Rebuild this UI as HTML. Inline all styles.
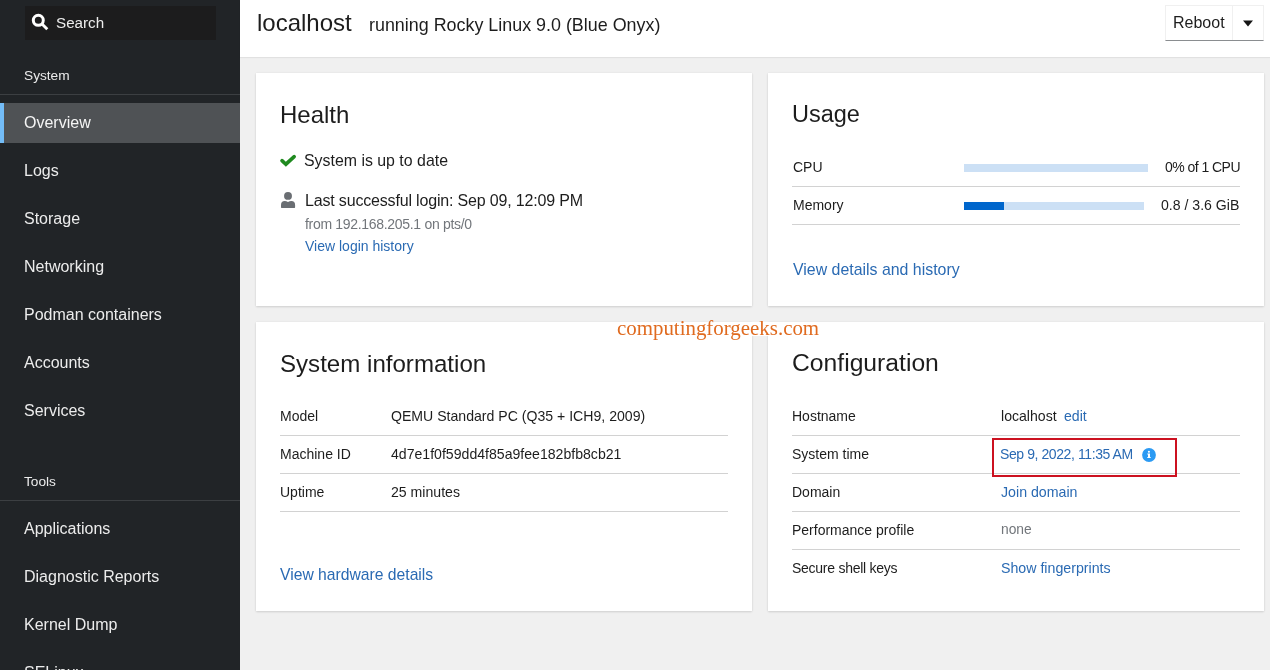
<!DOCTYPE html>
<html><head><meta charset="utf-8"><style>
html,body{margin:0;padding:0;width:1270px;height:670px;overflow:hidden;background:#f0f0f0}
body{position:relative;font-family:"Liberation Sans", sans-serif}
.t{position:absolute;white-space:nowrap;will-change:transform}
.r{position:absolute}
</style></head><body>
<div class="r" style="left:0px;top:0px;width:240px;height:670px;background:#212427;"></div>
<div class="r" style="left:25px;top:6px;width:191px;height:34px;background:#1c1c1d;"></div>
<svg class="r" style="left:30px;top:12px" width="20" height="20" viewBox="0 0 20 20"><circle cx="8.3" cy="8.3" r="5" fill="none" stroke="#fff" stroke-width="3"/><line x1="11.8" y1="11.8" x2="17.3" y2="17.3" stroke="#fff" stroke-width="2.9" stroke-linecap="butt"/></svg>
<div class="t" style="left:56.00px;top:14.93px;font-size:15.2px;line-height:15.2px;color:#ececec;">Search</div>
<div class="t" style="left:24.00px;top:68.70px;font-size:13.7px;line-height:13.7px;color:#ececec;">System</div>
<div class="r" style="left:0px;top:94px;width:240px;height:1px;background:#3c3f42;"></div>
<div class="r" style="left:0px;top:103px;width:240px;height:40px;background:#4f5255;"></div>
<div class="r" style="left:0px;top:103px;width:4px;height:40px;background:#73bcf7;"></div>
<div class="t" style="left:24.00px;top:115.25px;font-size:16px;line-height:16px;color:#f5f5f5;">Overview</div>
<div class="t" style="left:24.00px;top:163.25px;font-size:16px;line-height:16px;color:#ececec;">Logs</div>
<div class="t" style="left:24.00px;top:211.25px;font-size:16px;line-height:16px;color:#ececec;">Storage</div>
<div class="t" style="left:24.00px;top:259.25px;font-size:16px;line-height:16px;color:#ececec;">Networking</div>
<div class="t" style="left:24.00px;top:307.25px;font-size:16px;line-height:16px;color:#ececec;">Podman containers</div>
<div class="t" style="left:24.00px;top:355.25px;font-size:16px;line-height:16px;color:#ececec;">Accounts</div>
<div class="t" style="left:24.00px;top:403.25px;font-size:16px;line-height:16px;color:#ececec;">Services</div>
<div class="t" style="left:24.00px;top:474.60px;font-size:13.7px;line-height:13.7px;color:#ececec;">Tools</div>
<div class="r" style="left:0px;top:500px;width:240px;height:1px;background:#3c3f42;"></div>
<div class="t" style="left:24.00px;top:521.25px;font-size:16px;line-height:16px;color:#ececec;">Applications</div>
<div class="t" style="left:24.00px;top:569.25px;font-size:16px;line-height:16px;color:#ececec;">Diagnostic Reports</div>
<div class="t" style="left:24.00px;top:617.25px;font-size:16px;line-height:16px;color:#ececec;">Kernel Dump</div>
<div class="t" style="left:24.00px;top:665.25px;font-size:16px;line-height:16px;color:#ececec;">SELinux</div>
<div class="r" style="left:240px;top:0px;width:1030px;height:670px;background:#f0f0f0;"></div>
<div class="r" style="left:240px;top:0px;width:1030px;height:57px;background:#ffffff;box-shadow:0 1px 1px rgba(0,0,0,0.06);"></div>
<div class="t" style="left:257.00px;top:10.68px;font-size:24px;line-height:24px;color:#1d1d1d;">localhost</div>
<div class="t" style="left:369.00px;top:16.94px;font-size:17.9px;line-height:17.9px;color:#1d1d1d;">running Rocky Linux 9.0 (Blue Onyx)</div>
<div class="r" style="left:1165px;top:5px;width:99px;height:36px;background:#fff;border:1px solid #f0f0f0;border-bottom:1px solid #8a8d90;box-sizing:border-box"></div>
<div class="r" style="left:1232px;top:6px;width:1px;height:34px;background:#f0f0f0;"></div>
<div class="t" style="left:1173.40px;top:14.55px;font-size:16px;line-height:16px;color:#1d1d1d;">Reboot</div>
<svg class="r" style="left:1242px;top:19.6px" width="12" height="7" viewBox="0 0 12 7"><path d="M1 0.5 L11 0.5 L6 6.5 Z" fill="#151515"/></svg>
<div class="r" style="left:256px;top:73px;width:496px;height:233px;background:#fff;box-shadow:0 1px 2px rgba(3,3,3,0.12),0 0 2px rgba(3,3,3,0.06);"></div>
<div class="r" style="left:768px;top:73px;width:496px;height:233px;background:#fff;box-shadow:0 1px 2px rgba(3,3,3,0.12),0 0 2px rgba(3,3,3,0.06);"></div>
<div class="r" style="left:256px;top:322px;width:496px;height:289px;background:#fff;box-shadow:0 1px 2px rgba(3,3,3,0.12),0 0 2px rgba(3,3,3,0.06);"></div>
<div class="r" style="left:768px;top:322px;width:496px;height:289px;background:#fff;box-shadow:0 1px 2px rgba(3,3,3,0.12),0 0 2px rgba(3,3,3,0.06);"></div>
<div class="t" style="left:280.40px;top:103.08px;font-size:24px;line-height:24px;color:#1d1d1d;">Health</div>
<svg class="r" style="left:279px;top:154px" width="18" height="14" viewBox="0 0 18 14"><path d="M3 6.6 L6.9 10.2 L15.2 2.7" fill="none" stroke="#1f8a1f" stroke-width="3.6" stroke-linejoin="miter" stroke-linecap="round"/></svg>
<div class="t" style="left:304.00px;top:152.84px;font-size:15.9px;line-height:15.9px;color:#1d1d1d;">System is up to date</div>
<svg class="r" style="left:280px;top:191px" width="16" height="17" viewBox="0 0 16 17"><circle cx="8" cy="4.9" r="3.95" fill="#6a6e73"/><path d="M1 16.3 Q1 16.9 1.6 16.9 L14.5 16.9 Q15.1 16.9 15.1 16.3 L15.1 13.9 Q15.1 10 11.3 10 Q9.6 10 8 10.9 Q6.4 10 4.8 10 Q1 10 1 13.9 Z" fill="#6a6e73"/></svg>
<div class="t" style="left:304.50px;top:192.95px;font-size:16px;line-height:16px;color:#1d1d1d;letter-spacing:-0.17px;">Last successful login: Sep 09, 12:09 PM</div>
<div class="t" style="left:304.50px;top:216.75px;font-size:14px;line-height:14px;color:#72767b;letter-spacing:-0.31px;">from 192.168.205.1 on pts/0</div>
<div class="t" style="left:304.50px;top:238.95px;font-size:14px;line-height:14px;color:#2a6ab3;">View login history</div>
<div class="t" style="left:791.60px;top:103.40px;font-size:23.5px;line-height:23.5px;color:#1d1d1d;">Usage</div>
<div class="t" style="left:792.50px;top:160.15px;font-size:14px;line-height:14px;color:#1d1d1d;">CPU</div>
<div class="t" style="left:792.50px;top:198.15px;font-size:14px;line-height:14px;color:#1d1d1d;">Memory</div>
<div class="r" style="left:792px;top:186px;width:448px;height:1px;background:#d2d2d2;"></div>
<div class="r" style="left:792px;top:224px;width:448px;height:1px;background:#d2d2d2;"></div>
<div class="r" style="left:964px;top:164px;width:184px;height:8px;background:#cce0f5;"></div>
<div class="r" style="left:964px;top:202px;width:180px;height:8px;background:#cce0f5;"></div>
<div class="r" style="left:964px;top:202px;width:40px;height:8px;background:#0066cc;"></div>
<div class="t" style="left:1164.50px;top:160.15px;font-size:14px;line-height:14px;color:#1d1d1d;letter-spacing:-0.54px;">0% of 1 CPU</div>
<div class="t" style="right:30.50px;top:198.06px;font-size:14.1px;line-height:14.1px;color:#1d1d1d;">0.8 / 3.6 GiB</div>
<div class="t" style="left:792.50px;top:261.54px;font-size:15.9px;line-height:15.9px;color:#2a6ab3;">View details and history</div>
<div class="t" style="left:280.20px;top:351.79px;font-size:24.1px;line-height:24.1px;color:#1d1d1d;">System information</div>
<div class="t" style="left:280.20px;top:409.35px;font-size:14px;line-height:14px;color:#1d1d1d;">Model</div>
<div class="t" style="left:390.70px;top:409.26px;font-size:14.1px;line-height:14.1px;color:#1d1d1d;">QEMU Standard PC (Q35 + ICH9, 2009)</div>
<div class="r" style="left:280px;top:435px;width:448px;height:1px;background:#d2d2d2;"></div>
<div class="t" style="left:280.20px;top:447.35px;font-size:14px;line-height:14px;color:#1d1d1d;">Machine ID</div>
<div class="t" style="left:390.70px;top:447.26px;font-size:14.1px;line-height:14.1px;color:#1d1d1d;">4d7e1f0f59dd4f85a9fee182bfb8cb21</div>
<div class="r" style="left:280px;top:473px;width:448px;height:1px;background:#d2d2d2;"></div>
<div class="t" style="left:280.20px;top:485.35px;font-size:14px;line-height:14px;color:#1d1d1d;">Uptime</div>
<div class="t" style="left:390.70px;top:485.26px;font-size:14.1px;line-height:14.1px;color:#1d1d1d;">25 minutes</div>
<div class="r" style="left:280px;top:511px;width:448px;height:1px;background:#d2d2d2;"></div>
<div class="t" style="left:280.20px;top:567.21px;font-size:15.7px;line-height:15.7px;color:#2a6ab3;">View hardware details</div>
<div class="t" style="left:792.30px;top:351.29px;font-size:24.7px;line-height:24.7px;color:#1d1d1d;">Configuration</div>
<div class="t" style="left:792.30px;top:408.95px;font-size:14px;line-height:14px;color:#1d1d1d;">Hostname</div>
<div class="r" style="left:792px;top:435px;width:448px;height:1px;background:#d2d2d2;"></div>
<div class="t" style="left:792.30px;top:446.95px;font-size:14px;line-height:14px;color:#1d1d1d;">System time</div>
<div class="r" style="left:792px;top:473px;width:448px;height:1px;background:#d2d2d2;"></div>
<div class="t" style="left:792.30px;top:484.95px;font-size:14px;line-height:14px;color:#1d1d1d;">Domain</div>
<div class="r" style="left:792px;top:511px;width:448px;height:1px;background:#d2d2d2;"></div>
<div class="t" style="left:792.30px;top:522.95px;font-size:14px;line-height:14px;color:#1d1d1d;">Performance profile</div>
<div class="r" style="left:792px;top:549px;width:448px;height:1px;background:#d2d2d2;"></div>
<div class="t" style="left:792.30px;top:560.95px;font-size:14px;line-height:14px;color:#1d1d1d;letter-spacing:-0.26px;">Secure shell keys</div>
<div class="t" style="left:1000.50px;top:408.96px;font-size:14.1px;line-height:14.1px;color:#1d1d1d;">localhost</div>
<div class="t" style="left:1064.30px;top:408.96px;font-size:14.1px;line-height:14.1px;color:#2a6ab3;">edit</div>
<div class="t" style="left:999.80px;top:446.95px;font-size:14px;line-height:14px;color:#2a6ab3;letter-spacing:-0.41px;">Sep 9, 2022, 11:35 AM</div>
<svg class="r" style="left:1142px;top:448px" width="14" height="14" viewBox="0 0 14 14"><circle cx="7" cy="7" r="6.9" fill="#2b9af3"/><path d="M5.3 5.5 H8.0 V9.0 H8.7 V10.1 H5.3 V9.0 H6.0 V6.5 H5.3 Z" fill="#fff"/><circle cx="6.9" cy="3.7" r="1.05" fill="#fff"/></svg>
<div class="t" style="left:1000.50px;top:484.88px;font-size:14.2px;line-height:14.2px;color:#2a6ab3;">Join domain</div>
<div class="t" style="left:1000.50px;top:523.22px;font-size:13.8px;line-height:13.8px;color:#72767b;">none</div>
<div class="t" style="left:1000.50px;top:560.88px;font-size:14.2px;line-height:14.2px;color:#2a6ab3;">Show fingerprints</div>
<div class="r" style="left:992px;top:438px;width:185px;height:39px;border:2px solid #cc1120;box-sizing:border-box"></div>
<div class="r" style="left:752px;top:322px;width:16px;height:14px;background:#fff;"></div>
<div class="t" style="left:617.40px;top:317.50px;font-size:20.9px;line-height:20.9px;color:#e06b20;font-family:'Liberation Serif', serif;">computingforgeeks.com</div>
</body></html>
